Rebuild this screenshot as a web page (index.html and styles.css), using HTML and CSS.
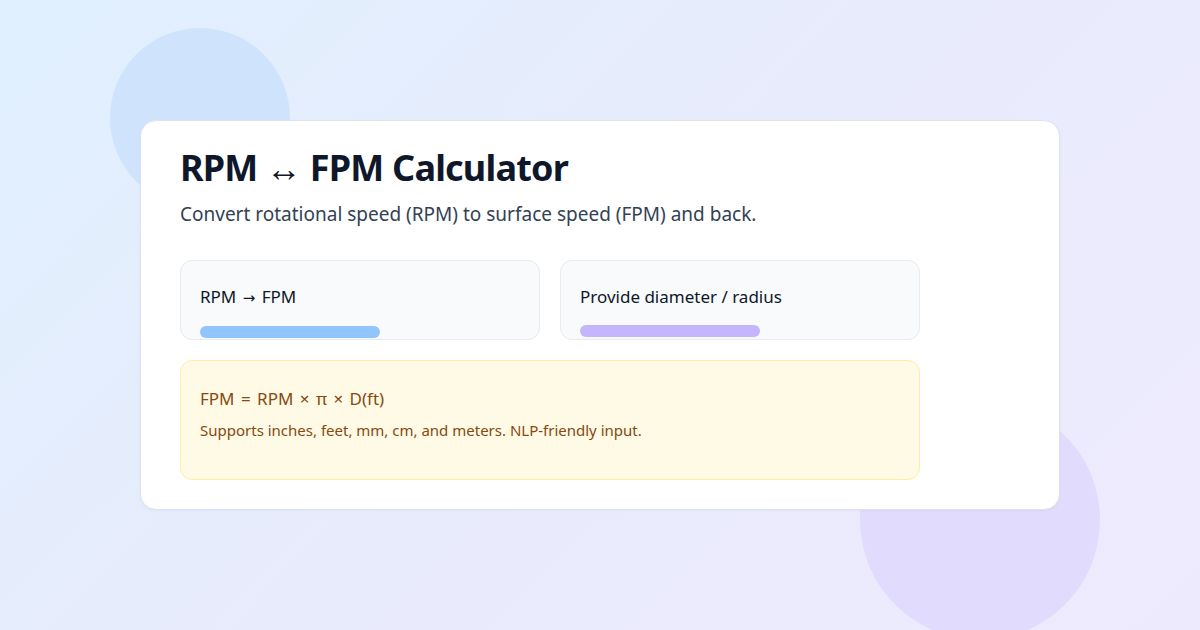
FILE: index.html
```html
<!DOCTYPE html>
<html lang="en">
<head>
<meta charset="utf-8">
<title>RPM ↔ FPM Calculator</title>
<link rel="stylesheet" href="styles.css">
</head>
<body>
<div class="stage">
  <div class="blob blob-blue"></div>
  <div class="blob blob-purple"></div>
  <main class="card">
    <h1 class="title">RPM ↔ FPM Calculator</h1>
    <p class="subtitle">Convert rotational speed (RPM) to surface speed (FPM) and back.</p>
    <div class="grid">
      <div class="tile">
        <div class="tile-label tile-label-arrow">RPM <span class="arrow">→</span> FPM</div>
        <div class="bar bar-blue"></div>
      </div>
      <div class="tile">
        <div class="tile-label">Provide diameter / radius</div>
        <div class="bar bar-purple"></div>
      </div>
      <div class="note">
        <div class="formula">FPM = RPM × π × D(ft)</div>
        <div class="note-text">Supports inches, feet, mm, cm, and meters. NLP-friendly input.</div>
      </div>
    </div>
  </main>
</div>
</body>
</html>
```
FILE: styles.css
```css
* { box-sizing: border-box; }
html, body { margin: 0; padding: 0; }
body {
  width: 1200px;
  height: 630px;
  overflow: hidden;
  font-family: "Noto Sans", "Open Sans", sans-serif;
}
.stage {
  position: relative;
  width: 1200px;
  height: 630px;
  background: linear-gradient(135deg, #e0f0fe 0%, #e8ebfc 50%, #eeeafd 100%);
  padding-top: 120px;
  display: flex;
  justify-content: center;
  overflow: hidden;
}
.blob {
  position: absolute;
  border-radius: 50%;
}
.blob-blue {
  left: 110px;
  top: 28px;
  width: 180px;
  height: 180px;
  background: #cfe3fd;
}
.blob-purple {
  left: 860px;
  top: 400px;
  width: 240px;
  height: 240px;
  background: #e1dcfd;
}
.card {
  position: relative;
  width: 920px;
  height: 390px;
  background: #ffffff;
  border: 1px solid #dde2ee;
  border-radius: 16px;
  box-shadow: 0 1px 3px rgba(15, 23, 42, 0.04);
  padding: 23px 39px 0;
}
.title {
  margin: 0;
  font-size: 36px;
  line-height: 48px;
  font-weight: 700;
  letter-spacing: -0.8px;
  color: #0f172a;
}
.subtitle {
  margin: 8px 0 0;
  font-size: 19px;
  line-height: 28px;
  color: #334155;
}
.grid {
  margin-top: 32px;
  width: 740px;
  display: grid;
  grid-template-columns: 360px 360px;
  gap: 20px;
}
.tile {
  height: 80px;
  background: #f8fafc;
  border: 1px solid #e8ecf2;
  border-radius: 12px;
  padding: 24px 19px 0;
}
.tile-label {
  font-size: 17px;
  line-height: 24px;
  color: #0f172a;
}
.tile-label-arrow { word-spacing: 2px; }
.arrow {
  font-family: "DejaVu Sans", sans-serif;
  font-size: 15px;
}
.bar {
  margin-top: 16px;
  width: 180px;
  height: 12px;
  border-radius: 6px;
}
.bar-blue { background: #93c5fd; }
.bar-purple { background: #c4b5fd; }
.note {
  grid-column: 1 / 3;
  height: 120px;
  background: #fefae6;
  border: 1px solid #fdefa8;
  border-radius: 12px;
  padding: 26px 19px 0;
}
.formula {
  font-size: 17px;
  line-height: 24px;
  word-spacing: 2px;
  color: #86490f;
}
.note-text {
  margin-top: 9px;
  font-size: 15px;
  line-height: 20px;
  color: #86490f;
}
```
